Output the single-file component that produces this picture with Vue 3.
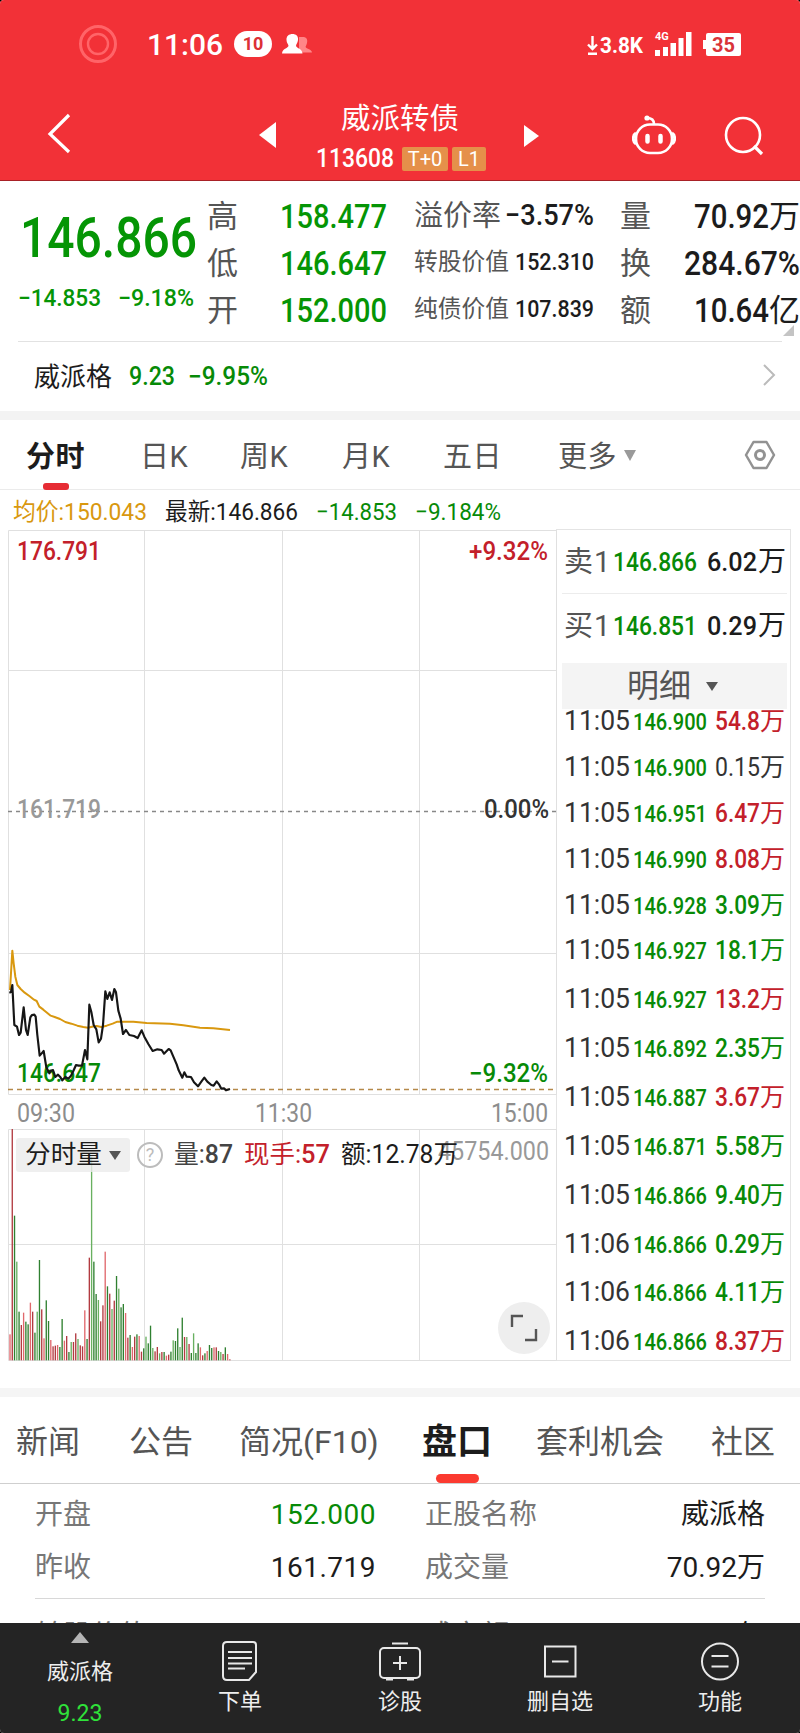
<template>
  <div class="phone">
    <header class="header">
      <div class="status">
        <svg class="status__cam" width="40" height="40" viewBox="0 0 40 40" fill="none" stroke="#ff6468">
          <circle cx="20" cy="20" r="17.5" stroke-width="3" />
          <circle cx="20" cy="20" r="10" stroke-width="2.4" />
        </svg>
        <span class="status__time" v-fit="76">11:06</span>
        <span class="status__pill">10</span>
        <svg class="status__people" width="31" height="20" viewBox="0 0 31 20">
          <path d="M21 3c3 0 5 2 4 6-.4 2-1.400 3-1.400 4 1 2 6 2 6.400 5.500H17V3z" fill="#ff8587" />
          <path d="M10.500 0c3.500 0 6 2 5.500 6-.3 3-2 4-2 6 1 2.500 6 2.500 6.500 7.500H0c.5-5 5.500-5 6.500-7.500 0-2-2-3-2-6C4.200 2 7 0 10.500 0z" fill="#fff" />
        </svg>
        <svg class="status__down" width="11" height="20" viewBox="0 0 11 20" fill="none" stroke="#fff" stroke-width="2.400">
          <path d="M5.500 0v13M1 8.500l4.500 4.500L10 8.500M1 17.800h9" />
        </svg>
        <span class="status__speed" v-fit="43">3.8K</span>
        <svg class="status__signal" width="37" height="24" viewBox="0 0 37 24" fill="#fff">
          <path d="M0 18h5v6H0zM8 15h5v9H8zM15.500 11h5.500v13h-5.500zM23.500 6h5v18h-5zM31 0h5.500v24H31z" />
          <text x="0" y="8" font-size="11" font-weight="700">4G</text>
        </svg>
        <span class="battery">35</span>
      </div>
      <div class="nav">
        <svg class="nav__back" width="24" height="42" viewBox="0 0 24 42" fill="none" stroke="#fff" stroke-width="3.200">
          <path d="M22 2 3 21l19 18" />
        </svg>
        <svg class="nav__prev" width="17" height="26" viewBox="0 0 17 26"><path d="M17 0v26L0 13z" fill="#fff" /></svg>
        <div class="nav__title">
          <h1 v-fit="118">威派转债</h1>
          <p>
            <span v-fit="78">113608</span>
            <em class="badge badge--wide">T+0</em>
            <em class="badge">L1</em>
          </p>
        </div>
        <svg class="nav__next" width="15" height="22" viewBox="0 0 15 22"><path d="M0 0v22l15-11z" fill="#fff" /></svg>
        <svg class="nav__robot" width="44" height="40" viewBox="0 0 44 40" fill="none" stroke="#fff" stroke-width="2.600">
          <circle cx="15" cy="3" r="2.600" fill="#fff" stroke="none" />
          <path d="M15 3c5 0 7 2 7 6" />
          <rect x="4" y="9.500" width="36" height="28.500" rx="14" />
          <path d="M4 18c-3.500 2-3.500 9 0 11M40 18c3.500 2 3.500 9 0 11" stroke-width="3" />
          <path d="M15.500 21v5.500M28.500 21v5.500" stroke-width="4.500" stroke-linecap="round" />
        </svg>
        <svg class="nav__search" width="40" height="40" viewBox="0 0 40 40" fill="none" stroke="#fff" stroke-width="2.600">
          <circle cx="19" cy="19" r="17" />
          <path d="m30 30 8 8" stroke-width="3.200" />
        </svg>
      </div>
    </header>

    <section class="quote">
      <div class="quote__main down">
        <strong v-fit="177">146.866</strong>
        <div class="quote__change">
          <span v-fit="83">−14.853</span>
          <span v-fit="76">−9.18%</span>
        </div>
      </div>
      <div class="quote__stats">
        <template v-for="s in stats" :key="s.label">
          <span class="lbl">{{ s.label }}</span>
          <b class="down big" v-fit="107">{{ s.value }}</b>
          <span :class="s.small ? 'lbl-s' : 'lbl-m'" v-fit="s.small ? 95 : 87">{{ s.label2 }}</span>
          <b :class="s.small ? 'val-s' : 'val-m'" v-fit="s.small ? 79 : 89">{{ s.value2 }}</b>
          <span class="lbl">{{ s.label3 }}</span>
          <div class="stat-end">
            <b class="big" v-fit="s.w">{{ s.value3 }}</b><span v-if="s.unit" class="unit">{{ s.unit }}</span>
          </div>
        </template>
      </div>
      <i class="quote__corner"></i>
    </section>

    <section class="linked">
      <span class="linked__name" v-fit="78">威派格</span>
      <span class="down" v-fit="46">9.23</span>
      <span class="down" v-fit="80">−9.95%</span>
      <svg width="14" height="24" viewBox="0 0 14 24" fill="none" stroke="#bbb" stroke-width="2"><path d="m2 2 10 10L2 22" /></svg>
    </section>

    <nav class="periods">
      <span v-for="p in periods" :key="p" :class="{ active: p === '分时' }">{{ p }}</span>
      <span class="more">更多<i class="caret"></i></span>
      <svg width="32" height="30" viewBox="0 0 32 30" fill="none" stroke="#929292" stroke-width="2.500">
        <path d="M9.500 2h13L30 15l-7.500 13h-13L2 15z" stroke-linejoin="round" />
        <circle cx="16" cy="15" r="4.500" stroke-width="3" />
      </svg>
    </nav>

    <div class="legend">
      <span class="avg" v-fit="134">均价:150.043</span>
      <span v-fit="133">最新:146.866</span>
      <span class="down num" v-fit="81">−14.853</span>
      <span class="down num" v-fit="86">−9.184%</span>
    </div>

    <section class="market">
      <div class="chart">
        <svg class="chart__plot" width="550" height="832" viewBox="0 0 550 832">
          <g fill="none" stroke="#e0e0e0" stroke-width="1">
            <path d="M.5 .5h548v564H.5zM.5 140.500h548M.5 423.500h548M136.500 .5v564M274.500 .5v564M411.500 .5v564" />
            <path d="M.5 599.500h548v231H.5zM.5 714.500h548M136.500 599.500v231M274.500 599.500v231M411.500 599.500v231" />
          </g>
          <path d="M0 281.500h549" stroke="#888" stroke-width="1.400" stroke-dasharray="4 4" />
          <path d="M0 559.500h549" stroke="#b5894a" stroke-width="1.400" stroke-dasharray="5 4" />
          <g transform="translate(-8 400) scale(.33333)">
            <rect
              v-for="(b, i) in bars"
              :key="i"
              :x="28 + i * 6.8"
              :y="b.top"
              width="4"
              :height="1291 - b.top"
              :fill="b.up ? (i % 3 ? '#b23a40' : '#e0686c') : (i % 3 ? '#2f8030' : '#68b060')"
            />
            <polyline :points="avgLine" fill="none" stroke="#d9980f" stroke-width="6" stroke-linejoin="round" />
          </g>
        </svg>
        <span class="tag tag--tl up" v-fit="84">176.791</span>
        <span class="tag tag--tr up" v-fit="79">+9.32%</span>
        <span class="tag tag--ml" v-fit="84">161.719</span>
        <span class="tag tag--mr" v-fit="65">0.00%</span>
        <span class="tag tag--bl down" v-fit="84">146.647</span>
        <span class="tag tag--br down" v-fit="79">−9.32%</span>
        <svg class="chart__plot" width="550" height="832" viewBox="0 0 550 832">
          <g transform="translate(-8 400) scale(.33333)">
            <polyline :points="priceLine" fill="none" stroke="#161616" stroke-width="6.500" stroke-linejoin="round" />
          </g>
        </svg>
        <div class="times">
          <span v-fit="58">09:30</span>
          <span v-fit="57">11:30</span>
          <span v-fit="57">15:00</span>
        </div>
        <span class="tag tag--vol" v-fit="111">45754.000</span>
        <div class="volbar">
          <span class="volbar__pick"><span v-fit="77">分时量</span><i class="caret"></i></span>
          <span class="volbar__help">?</span>
          <span class="volbar__num" v-fit="59">量:<b>87</b></span>
          <span class="up volbar__num" v-fit="86">现手:<b>57</b></span>
          <span v-fit="117">额:12.78万</span>
        </div>
        <button class="expand">
          <svg width="28" height="28" viewBox="0 0 28 28" fill="none" stroke="#555" stroke-width="2.400"><path d="M2 13V2h11M26 15v11H15" /></svg>
        </button>
      </div>

      <aside class="side">
        <div class="order">
          <span class="order__lbl">卖1</span><b class="down" v-fit="84">146.866</b><b v-fit="50">6.02</b><i>万</i>
        </div>
        <div class="order order--buy">
          <span class="order__lbl">买1</span><b class="down" v-fit="84">146.851</b><b v-fit="50">0.29</b><i>万</i>
        </div>
        <div class="side__head"><span>明细</span><i class="caret"></i></div>
        <ul class="trades">
          <li v-for="(t, i) in trades" :key="i" :class="{ tall: i > 5 }">
            <span class="trades__time" v-fit="66">{{ t[0] }}</span>
            <span class="trades__price down" v-fit="74">{{ t[1] }}</span>
            <span class="trades__amt" :class="t[3]" v-fit="45">{{ t[2] }}</span>
            <i :class="t[3]">万</i>
          </li>
        </ul>
      </aside>
    </section>

    <nav class="sections">
      <span v-for="s in sections" :key="s" :class="{ active: s === '盘口' }">{{ s }}</span>
    </nav>

    <section class="detail">
      <div class="detail__row">
        <span>开盘</span><b class="down">152.000</b><span>正股名称</span><b>威派格</b>
      </div>
      <div class="detail__row">
        <span>昨收</span><b>161.719</b><span>成交量</span><b>70.92万</b>
      </div>
      <div class="detail__row detail__row--next">
        <span>转股价值</span><b>152.310</b><span>成交额</span><b>10.64亿</b>
      </div>
    </section>

    <footer class="dock">
      <div class="dock__item dock__item--stock">
        <i></i>
        <span>威派格</span>
        <b>9.23</b>
      </div>
      <div class="dock__item">
        <svg width="44" height="44" viewBox="0 0 44 44">
          <path d="M9 3h26q3 0 3 3v27l-7 8H9q-4 0-4-4V7q0-4 4-4z" />
          <path d="M10 13h24M10 19h24M10 24.500h24M10 29.500h17" />
        </svg>
        <span>下单</span>
      </div>
      <div class="dock__item">
        <svg width="44" height="44" viewBox="0 0 44 44">
          <rect x="2" y="9" width="40" height="30" rx="4" />
          <path d="M14 4.500h16M22 17v14M15 24h14M8 40.500h7M29 40.500h7" />
        </svg>
        <span>诊股</span>
      </div>
      <div class="dock__item">
        <svg width="44" height="44" viewBox="0 0 44 44">
          <path d="M7 7.500h30.500v30H7zM14 22.500h16.500" />
        </svg>
        <span>删自选</span>
      </div>
      <div class="dock__item">
        <svg width="44" height="44" viewBox="0 0 44 44">
          <circle cx="22" cy="22.500" r="18" />
          <path d="M13.500 17h17M13.500 27.500h17" />
        </svg>
        <span>功能</span>
      </div>
    </footer>
  </div>
</template>

<script setup>
// squeeze or stretch a piece of text to a fixed width
const vFit = {
  mounted(el, { value }) {
    el.style.display = 'inline-block'
    el.style.whiteSpace = 'nowrap'
    el.style.width = 'max-content'
    const natural = el.getBoundingClientRect().width
    el.style.width = value + 'px'
    el.style.transformOrigin = 'left'
    el.style.transform = `scaleX(${value / natural})`
  },
}

const stats = [
  { label: '高', value: '158.477', label2: '溢价率', value2: '−3.57%', label3: '量', value3: '70.92', unit: '万', w: 75 },
  { label: '低', value: '146.647', label2: '转股价值', value2: '152.310', small: true, label3: '换', value3: '284.67%', w: 116 },
  { label: '开', value: '152.000', label2: '纯债价值', value2: '107.839', small: true, label3: '额', value3: '10.64', unit: '亿', w: 75 },
]

const periods = ['分时', '日K', '周K', '月K', '五日']
const sections = ['新闻', '公告', '简况(F10)', '盘口', '套利机会', '社区']

const trades = [
  ['11:05', '146.900', '54.8', 'up'],
  ['11:05', '146.900', '0.15', 'flat'],
  ['11:05', '146.951', '6.47', 'up'],
  ['11:05', '146.990', '8.08', 'up'],
  ['11:05', '146.928', '3.09', 'down'],
  ['11:05', '146.927', '18.1', 'down'],
  ['11:05', '146.927', '13.2', 'up'],
  ['11:05', '146.892', '2.35', 'down'],
  ['11:05', '146.887', '3.67', 'up'],
  ['11:05', '146.871', '5.58', 'down'],
  ['11:05', '146.866', '9.40', 'down'],
  ['11:06', '146.866', '0.29', 'down'],
  ['11:06', '146.866', '4.11', 'down'],
  ['11:06', '146.866', '8.37', 'up'],
]

// one bar a minute: top of the bar, r = up, g = down
const volume =
  '1213r 597r 857g 995g 1145g 1185r 1148r 1175g 1183g 1118r 1145r 1208g 1145g 990g 1138r 1225r 1111g 1173g 1230r 1249r ' +
  '1247r 1245r 1251g 1167g 1232r 1218r 1266g 1236g 1236r 1210r 1227g 1246r 1249r 1141r 1227g 983r 680g 995g 1092g 1110g ' +
  '1174r 1126r 965r 1069g 1091r 1137g 1112r 1038g 1076g 1132g 1122g 1149r 1223r 1215g 1251r 1220r 1213g 1218r 1265r 1255g ' +
  '1220g 1240g 1187g 1254g 1264r 1251r 1270g 1266r 1266g 1277r 1274r 1265g 1231g 1233g 1195g 1251g 1163g 1221r 1221g 1242r ' +
  '1269g 1210g 1269g 1240g 1252r 1276r 1270g 1263r 1245g 1254g 1252r 1252r 1263g 1266g 1272r 1252g 1272r 1288r'
const bars = volume.split(' ').map((v) => ({ top: parseInt(v), up: v.endsWith('r') }))

const avgLine =
  '30,180 37,62 41,100 46,140 52,165 62,177 74,188 88,198 102,209 110,213 118,230 130,239 142,249 152,257 164,261 ' +
  '180,267 196,276 214,281 232,287 250,291 264,293 276,290 290,288 304,291 320,287 338,281 352,275 400,275 440,279 ' +
  '510,281 550,286 600,293 640,295 690,300'

const priceLine =
  '28,188 33,186 37,165 43,285 51,290 57,315 62,308 71,232 78,300 83,315 91,262 96,255 103,254 107,260 112,315 119,377 ' +
  '125,370 131,363 139,412 148,430 153,422 159,420 166,441 174,434 180,440 187,451 196,441 205,446 213,437 220,423 228,405 ' +
  '236,407 246,407 255,360 262,388 268,224 274,246 281,285 289,298 296,337 303,326 309,285 316,184 322,207 329,187 336,210 ' +
  '343,177 348,187 355,242 362,266 369,312 378,300 388,315 402,318 413,324 425,301 433,320 445,342 458,363 472,358 485,360 ' +
  '492,371 506,357 512,361 520,380 530,403 536,421 547,443 553,427 560,440 573,441 582,457 594,469 604,455 613,443 622,455 ' +
  '634,465 641,467 650,454 657,463 664,476 672,475 678,481 690,477'
</script>

<style>
body {
  background: #000;
}
</style>

<style scoped>
.phone {
  width: 800px;
  height: 1733px;
  overflow: hidden;
  display: flex;
  flex-direction: column;
  background: #fff;
  border-radius: 4px;
  color: #1c1c1c;
  font-family: Roboto, 'Noto Sans CJK SC', sans-serif;
}
.phone i, .phone em { font-style: normal; }
.phone b { font-weight: 500; }
.down { color: #078a07; }
.up { color: #c3202a; }
.flat { color: #333; }

.caret {
  display: inline-block;
  width: 0;
  height: 0;
  border: 6px solid transparent;
  border-top: 9px solid #555;
  border-bottom: 0;
}

.header {
  height: 181px;
  flex: none;
  box-sizing: border-box;
  background: #f23137;
  border-bottom: 1px solid #a82126;
  color: #fff;
}
.status {
  display: flex;
  align-items: center;
  height: 88px;
}
.status__cam { margin-left: 78px; }
.status__time { margin-left: 29px; font-size: 30px; font-weight: 500; }
.status__pill {
  margin-left: 11px;
  width: 38px;
  height: 26px;
  line-height: 26px;
  border-radius: 13px;
  background: #fff;
  color: #dc3036;
  text-align: center;
  font-size: 18px;
  font-weight: 700;
}
.status__people { margin-left: 10px; }
.status__down { margin: 4px 0 0 274px; }
.status__speed { margin: 3px 0 0 2px; font-size: 22px; font-weight: 700; }
.status__signal { margin-left: 12px; overflow: visible; }
.battery {
  position: relative;
  margin-left: 14px;
  width: 35px;
  height: 23px;
  line-height: 24px;
  border-radius: 2px;
  background: #fff;
  color: #d93338;
  text-align: center;
  font-size: 20px;
  font-weight: 700;
}
.battery::before {
  content: '';
  position: absolute;
  left: -3px;
  top: 7px;
  width: 3px;
  height: 9px;
  background: #fff;
}

.nav { display: flex; }
.nav__back { margin: 25px 0 0 47px; }
.nav__prev { margin: 34px 0 0 188px; }
.nav__title { width: 170px; margin-left: 40px; }
.nav__title h1 {
  margin: 12px 0 0 25px;
  font-size: 29px;
  line-height: 38px;
  font-weight: 400;
}
.nav__title p {
  margin: 7px 0 0;
  display: flex;
  align-items: center;
  font-size: 25px;
  line-height: 28px;
  font-weight: 500;
}
.badge {
  margin-left: 4px;
  width: 34px;
  height: 24px;
  line-height: 24px;
  border-radius: 2px;
  background: #e5904a;
  text-align: center;
  font-size: 20px;
  font-weight: 400;
}
.badge--wide { margin-left: 8px; width: 46px; }
.nav__next { margin: 37px 0 0 38px; }
.nav__robot { margin: 27px 0 0 93px; }
.nav__search { margin: 28px 0 0 48px; }

.quote {
  position: relative;
  display: flex;
  height: 161px;
  flex: none;
}
.quote .down { color: #059505; }
.quote::after {
  content: '';
  position: absolute;
  left: 18px;
  right: 18px;
  bottom: 0;
  height: 1px;
  background: #e2e2e2;
}
.quote__main { width: 207px; flex: none; }
.quote__main strong {
  margin: 25px 0 0 20px;
  font-size: 55px;
  line-height: 64px;
  font-weight: 500;
}
.quote__change {
  display: flex;
  gap: 17px;
  margin: 13px 0 0 18px;
  font-size: 24px;
  line-height: 30px;
  font-weight: 500;
}
.quote__stats {
  display: grid;
  grid-template-columns: 73px 134px 91px 115px 32px 148px;
  grid-template-rows: repeat(3, 47px);
  align-items: center;
  padding-top: 12px;
}
.lbl { font-size: 31px; line-height: 47px; color: #555; }
.big { font-size: 33px; line-height: 47px; }
.lbl-m { font-size: 29px; line-height: 46px; margin-bottom: 1px; color: #555; }
.lbl-s { font-size: 24px; line-height: 45px; margin-bottom: 2px; color: #555; }
.val-m { font-size: 29px; line-height: 45px; margin: 0 26px 2px 0; justify-self: end; }
.val-s { font-size: 24px; line-height: 45px; margin: 0 26px 2px 0; justify-self: end; }
.stat-end { display: flex; justify-content: flex-end; }
.unit { font-size: 31px; line-height: 47px; }
.quote__corner {
  position: absolute;
  right: 6px;
  bottom: 6px;
  border-left: 11px solid transparent;
  border-bottom: 11px solid #c4c4c4;
}

.linked {
  display: flex;
  align-items: center;
  height: 69px;
  flex: none;
  padding: 0 24px 0 34px;
  border-bottom: 9px solid #f3f3f3;
  font-size: 25px;
  font-weight: 500;
}
.linked__name { font-size: 26px; margin: 0 17px 5px 0; font-weight: 400; }
.linked .down + .down { margin-left: 13px; }
.linked svg { margin: 0 0 3px auto; }

.periods {
  display: grid;
  grid-template-columns: 114px 100px 102px 101px 115px 186px 32px;
  align-items: center;
  height: 69px;
  flex: none;
  padding-left: 26px;
  border-bottom: 1px solid #ebebeb;
  font-size: 29px;
  letter-spacing: .5px;
  color: #555;
}
.periods span { position: relative; height: 69px; line-height: 74px; }
.periods .active { font-weight: 700; color: #1c1c1c; }
.periods .active::after {
  content: '';
  position: absolute;
  left: 17px;
  bottom: -1px;
  width: 26px;
  height: 7px;
  border-radius: 3px;
  background: #e62c34;
}
.periods .caret { border-width: 11px 6.500px 0; border-top-color: #9a9a9a; margin: 0 0 6px 7px; }

.legend {
  display: flex;
  gap: 18px;
  height: 40px;
  flex: none;
  padding-left: 13px;
  font-size: 24px;
  line-height: 44px;
}
.avg { color: #d9980f; }
.num { font-weight: 450; }

.market { display: flex; height: 858px; flex: none; padding-left: 8px; }
.chart { position: relative; width: 548px; }
.chart__plot { position: absolute; left: 0; top: 0; }
.tag { position: absolute; font-size: 25px; line-height: 28px; font-weight: 500; }
.tag--tl { left: 9px; top: 8px; }
.tag--tr { left: 461px; top: 8px; }
.tag--ml { left: 9px; top: 266px; color: #999; }
.tag--mr { left: 476px; top: 266px; color: #333; }
.tag--bl { left: 9px; top: 530px; }
.tag--br { left: 461px; top: 530px; }
.tag--vol { left: 430px; top: 608px; color: #999; font-weight: 450; }
.times {
  position: relative;
  display: flex;
  justify-content: space-between;
  margin-top: 566px;
  padding: 0 8px 0 9px;
  height: 34px;
  font-size: 25px;
  line-height: 35px;
  font-weight: 450;
  color: #8d8d8d;
}
.volbar {
  position: relative;
  display: flex;
  align-items: center;
  margin-top: 8px;
  padding-left: 8px;
  height: 34px;
  line-height: 34px;
  font-size: 25px;
}
.volbar__pick {
  display: flex;
  align-items: center;
  gap: 7px;
  width: 105px;
  height: 34px;
  padding-left: 9px;
  border-radius: 3px;
  background: rgba(235, 235, 235, .8);
}
.volbar__help {
  width: 22px;
  height: 22px;
  margin: 0 11px 0 7px;
  border: 2px solid #bcbcbc;
  border-radius: 50%;
  color: #bcbcbc;
  text-align: center;
  font-size: 18px;
  line-height: 22px;
}
.volbar__num { margin-right: 11px; color: #444; }
.volbar__num.up { color: #c3202a; }
.expand {
  position: absolute;
  left: 490px;
  top: 772px;
  width: 52px;
  height: 52px;
  padding: 12px;
  border: 0;
  border-radius: 50%;
  background: #eee;
}

.side {
  width: 235px;
  height: 832px;
  margin-top: -1px;
  box-sizing: border-box;
  border: 1px solid #e4e4e4;
}
.order {
  display: flex;
  height: 63px;
  margin: 0 3px 0 5px;
  padding-left: 2px;
  line-height: 64px;
  font-size: 26px;
  border-bottom: 1px solid #ececec;
}
.order--buy { border: 0; height: 69px; }
.order__lbl { width: 49px; font-size: 29px; color: #555; letter-spacing: 1px; }
.order b { margin-right: 10px; }
.order b + b { margin-right: 1px; }
.order i { font-size: 28px; }
.side__head {
  position: relative;
  display: flex;
  align-items: center;
  justify-content: center;
  gap: 15px;
  height: 46px;
  margin: 0 3px 0 5px;
  padding-right: 4px;
  background: #f4f4f4;
  font-size: 32px;
  line-height: 53px;
  color: #555;
}
.trades {
  margin: -11px 0 0;
  padding: 0 0 0 7px;
  list-style: none;
}
.trades li { display: flex; align-items: baseline; height: 45.900px; line-height: 45.800px; }
.trades li.tall { height: 48.850px; line-height: 51.900px; }
.trades__time { font-size: 28px; color: #333; font-weight: 450; }
.trades__price { margin-left: 3px; font-size: 23px; }
.trades__amt { margin-left: 8px; font-size: 25px; }
.trades__price, .trades__amt { font-weight: 500; }
.trades__amt.flat { font-weight: 450; }
.trades i { font-size: 25px; }

.sections {
  display: grid;
  grid-template-columns: 113px 110px 183px 114px 175px 90px;
  height: 86px;
  flex: none;
  padding-left: 16px;
  border-top: 9px solid #f5f5f5;
  border-bottom: 1px solid #cfcfcf;
  font-size: 32px;
  line-height: 91px;
  color: #555;
}
.sections span { position: relative; height: 86px; white-space: nowrap; }
.sections .active { font-weight: 700; font-size: 35px; color: #1c1c1c; }
.sections .active::after {
  content: '';
  position: absolute;
  left: 14px;
  bottom: 0;
  width: 43px;
  height: 9px;
  border-radius: 5px;
  background: #fb3a30;
}

.detail { flex: 1; overflow: hidden; padding: 4px 35px 0; font-size: 28px; }
.detail__row {
  display: grid;
  grid-template-columns: 150px 191px 200px 189px;
  height: 53px;
  line-height: 53px;
}
.detail__row span { color: #777; }
.detail__row b { font-weight: 400; text-align: right; }
.detail__row b:nth-child(2) { letter-spacing: .5px; }
.detail__row span:nth-child(3) { padding-left: 49px; }
.detail__row--next { margin-top: 4px; padding-top: 10px; border-top: 1px solid #d8d8d8; }

.dock {
  display: grid;
  grid-template-columns: repeat(5, 160px);
  height: 110px;
  flex: none;
  background: #242424;
  color: #eee;
}
.dock__item {
  display: flex;
  flex-direction: column;
  align-items: center;
  font-size: 22px;
}
.dock__item svg { margin-top: 16px; fill: none; stroke: #e8e8e8; stroke-width: 2; }
.dock__item span { margin-top: 5px; line-height: 28px; }
.dock__item--stock i { margin-top: 9px; border: 9px solid transparent; border-top: 0; border-bottom: 11px solid #b5b5b5; }
.dock__item--stock span { margin-top: 15px; }
.dock__item--stock b { margin-top: 14px; line-height: 28px; font-size: 23px; font-weight: 400; color: #2fe23a; }
</style>
